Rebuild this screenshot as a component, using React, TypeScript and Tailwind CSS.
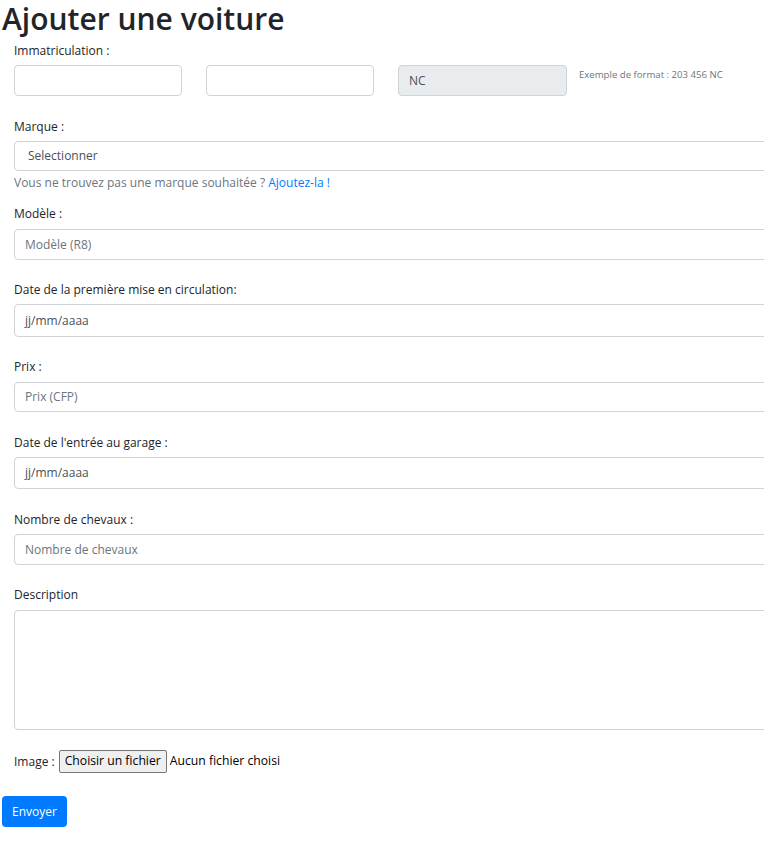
import React from "react";

const font = { fontFamily: '"Open Sans", "Noto Sans", Arial, sans-serif' };

function Label({ children, className = "" }: { children: React.ReactNode; className?: string }) {
  return <div className={"h-[20px] pt-[1px] leading-[20px] text-[12px] text-[#212529] " + className}>{children}</div>;
}

function Field({ placeholder, h = "h-[31px]", value, className = "" }: { placeholder?: string; h?: string; value?: string; className?: string }) {
  return (
    <div className={"w-[780px] border border-[#ced4da] rounded-[4px] bg-white flex items-center px-[10px] text-[12px] " + h + " " + className}>
      {value ? <span className="text-[#495057]">{value}</span> : <span className="text-[#6c757d]">{placeholder}</span>}
    </div>
  );
}

export default function App() {
  return (
    <div className="w-[764px] h-[857px] overflow-hidden bg-white text-[#212529]" style={font}>
      <div className="pl-[2px] pt-[1px]">
        <h1 className="text-[30px] font-semibold leading-[36px] text-[#212529]">Ajouter une voiture</h1>
      </div>
      <div className="pl-[14px]">
        <Label className="mt-[3px]">Immatriculation :</Label>
        <div className="mt-[5px] flex items-start gap-[24px]">
          <div className="w-[168px] h-[31px] border border-[#ced4da] rounded-[4px] bg-white" />
          <div className="w-[168px] h-[31px] border border-[#ced4da] rounded-[4px] bg-white" />
          <div className="w-[169px] h-[31px] border border-[#ced4da] rounded-[4px] bg-[#e9ecef] flex items-center px-[10px] text-[12px] text-[#495057]">NC</div>
          <div className="-ml-[12px] mt-[4px] text-[9.6px] text-[#6c757d] leading-[12px]">Exemple de format : 203 456 NC</div>
        </div>

        <Label className="mt-[20px]">Marque :</Label>
        <Field h="h-[30px]" value="Selectionner" className="mt-[5px] px-[13px]" />
        <div className="mt-[1px] h-[20px] pt-[1px] leading-[20px] text-[12px] text-[#6c757d]">
          Vous ne trouvez pas une marque souhaitée ? <span className="text-[#007bff]">Ajoutez-la !</span>
        </div>

        <Label className="mt-[11px]">Modèle :</Label>
        <Field placeholder="Modèle (R8)" className="mt-[6px]" />

        <Label className="mt-[19px]">Date de la première mise en circulation:</Label>
        <Field h="h-[33px]" value="jj/mm/aaaa" className="mt-[5px]" />

        <Label className="mt-[19px]">Prix :</Label>
        <Field placeholder="Prix (CFP)" h="h-[30px]" className="mt-[6px]" />

        <Label className="mt-[20px]">Date de l'entrée au garage :</Label>
        <Field h="h-[32px]" value="jj/mm/aaaa" className="mt-[5px]" />

        <Label className="mt-[20px]">Nombre de chevaux :</Label>
        <Field placeholder="Nombre de chevaux" className="mt-[5px]" />

        <Label className="mt-[19px]">Description</Label>
        <div className="mt-[6px] w-[780px] h-[120px] border border-[#ced4da] rounded-[4px] bg-white" />

        <div className="mt-[20px] flex items-center h-[23px] text-[12px]">
          <span className="text-[#212529]">Image :</span>
          <span className="ml-[4px] h-[23px] px-[5px] border border-[#767676] rounded-[2px] bg-[#efefef] flex items-center text-[12.2px] text-black">Choisir un fichier</span>
          <span className="ml-[3px] text-[12.2px] text-black">Aucun fichier choisi</span>
        </div>
      </div>
      <div className="pl-[2px] mt-[23px]">
        <button className="h-[31px] px-[10px] rounded-[4px] bg-[#007bff] text-white text-[12px]">Envoyer</button>
      </div>
    </div>
  );
}
